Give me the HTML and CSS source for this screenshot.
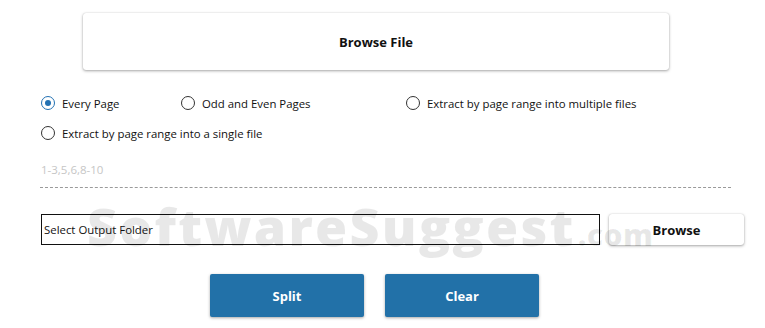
FILE: index.html
```html
<!DOCTYPE html>
<html>
<head>
<meta charset="utf-8">
<link rel="stylesheet" href="styles.css">
</head>
<body>
<div class="page">
  <div class="file-row">
    <div class="card-btn browse-file">Browse File</div>
  </div>
  <div class="options">
    <label class="opt"><span class="radio checked"></span>Every Page</label>
    <label class="opt"><span class="radio"></span>Odd and Even Pages</label>
    <label class="opt"><span class="radio"></span>Extract by page range into multiple files</label>
    <label class="opt wide"><span class="radio"></span>Extract by page range into a single file</label>
  </div>
  <div class="range">1-3,5,6,8-10</div>
  <div class="dash"></div>
  <div class="output-row">
    <div class="folder">Select Output Folder</div>
    <div class="card-btn browse">Browse</div>
  </div>
  <div class="actions">
    <div class="blue-btn">Split</div>
    <div class="blue-btn">Clear</div>
  </div>
  <div class="watermark">SoftwareSuggest<span class="dotcom">.com</span></div>
</div>
</body>
</html>
```
FILE: styles.css
```css
html, body {
  margin: 0;
  padding: 0;
  background: #ffffff;
}
body {
  font-family: "Segoe UI", "Open Sans", "Noto Sans", sans-serif;
  color: #111;
  font-size: 12px;
}
.page {
  position: relative;
  width: 765px;
  height: 328px;
  overflow: hidden;
}
.file-row {
  padding: 13px 0 0 83px;
}
.card-btn {
  background: #fff;
  border-radius: 3px;
  box-shadow: 0 1px 3px rgba(0,0,0,0.35), 0 0 1px rgba(0,0,0,0.2);
  display: flex;
  align-items: center;
  justify-content: center;
  font-weight: 700;
  font-size: 13px;
  color: #111;
}
.browse-file {
  width: 586px;
  height: 57px;
}
.options {
  display: grid;
  grid-template-columns: 140px 225px auto;
  grid-auto-rows: 30px;
  margin: 18px 0 0 41px;
}
.opt {
  display: flex;
  align-items: center;
  gap: 7px;
  font-size: 11.4px;
  color: #111;
  white-space: nowrap;
}
.opt.wide {
  grid-column: 1 / span 3;
}
.radio {
  width: 12px;
  height: 12px;
  border: 1px solid #333;
  border-radius: 50%;
  box-sizing: content-box;
  position: relative;
  flex: none;
}
.radio.checked {
  border-color: #2271b3;
}
.radio.checked::after {
  content: "";
  position: absolute;
  left: 3px;
  top: 3px;
  width: 6px;
  height: 6px;
  border-radius: 50%;
  background: #2271b3;
}
.range {
  margin: 14px 0 0 41px;
  color: #c6c6c6;
  font-size: 11.5px;
  height: 16px;
  line-height: 16px;
}
.dash {
  margin: 9px 34px 0 40px;
  border-top: 1px dashed #9a9a9a;
  height: 0;
}
.output-row {
  display: flex;
  align-items: stretch;
  gap: 9px;
  margin: 26px 0 0 41px;
  height: 31px;
}
.folder {
  width: 559px;
  border: 1px solid #111;
  box-sizing: border-box;
  display: flex;
  align-items: center;
  padding-left: 2px;
  font-size: 11.4px;
  color: #111;
}
.browse {
  width: 135px;
}
.actions {
  display: flex;
  gap: 21px;
  margin: 29px 0 0 210px;
}
.blue-btn {
  width: 154px;
  height: 43px;
  background: #2271a8;
  color: #fff;
  font-weight: 700;
  font-size: 13px;
  display: flex;
  align-items: center;
  justify-content: center;
  border-radius: 2px;
  box-shadow: 0 1px 3px rgba(0,0,0,0.35);
}
.watermark {
  position: absolute;
  left: 87px;
  top: 193px;
  font-family: "Open Sans", "Noto Sans", sans-serif;
  font-weight: 800;
  font-size: 52px;
  letter-spacing: 2.2px;
  color: rgba(0,0,0,0.09);
  white-space: nowrap;
  line-height: 66px;
  pointer-events: none;
}
.dotcom {
  font-size: 30px;
  letter-spacing: 0.5px;
  margin-left: 2px;
}
```
